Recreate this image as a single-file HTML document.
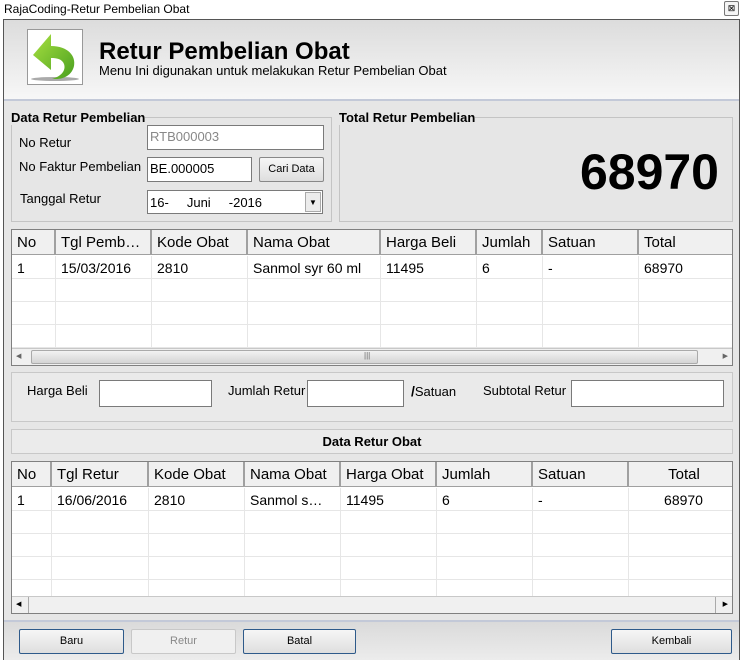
<!DOCTYPE html>
<html><head><meta charset="utf-8"><style>
*{box-sizing:border-box;margin:0;padding:0}
body{width:742px;height:661px;overflow:hidden;background:#fff;font-family:"Liberation Sans",sans-serif;position:relative;color:#000}
.a{position:absolute}
.t{font-size:13px;white-space:nowrap}
.inp{position:absolute;background:#fff;border:1px solid #7a7a7a;font-size:13px;padding:3px 2px;white-space:nowrap}
.btn{position:absolute;border:1px solid #2e5a8a;border-radius:2px;background:linear-gradient(#f6f6f6,#dedede);font-size:11px;text-align:center;line-height:22px}
.grid{position:absolute;background:#fff;border:1px solid #808080;overflow:hidden}
.hd{position:absolute;top:0;height:25px;background:#f0f0f0;border-right:2px solid #a0a0a0;border-bottom:1px solid #a0a0a0;font-size:15px;line-height:25px;padding-left:5px;white-space:nowrap;overflow:hidden}
.cell{position:absolute;font-size:14px;height:23px;line-height:24px;padding-left:5px;border-right:1px solid #e6e6e6;border-bottom:1px solid #e6e6e6;white-space:nowrap}
.sb{position:absolute;left:0;right:0;height:17px;background:#f0f0f0;border-top:1px solid #c8c8c8}
</style></head><body>
<div class="a t" style="left:4px;top:2px;font-size:12px">RajaCoding-Retur Pembelian Obat</div>
<div class="a" style="left:724px;top:1px;width:15px;height:15px;border:1px solid #777;border-radius:2px;font-size:9px;text-align:center;line-height:13px;background:#f4f4f4">&#8864;</div>
<div class="a" style="left:3px;top:19px;width:737px;height:641px;border:1px solid #555;background:#e6e6e6"></div>
<div class="a" style="left:4px;top:20px;width:735px;height:81px;background:linear-gradient(#dcdcdc,#f7f7f7);border-bottom:2px solid #c3c9d8"></div>
<div class="a" style="left:27px;top:29px;width:56px;height:56px;border:1px solid #999;background:#fff">
<svg width="54" height="54" viewBox="0 0 54 54"><defs><linearGradient id="g" x1="0" y1="0" x2="1" y2="1"><stop offset="0" stop-color="#a8e040"/><stop offset="1" stop-color="#4aa020"/></linearGradient></defs>
<ellipse cx="27" cy="49" rx="24" ry="2" fill="#aaa"/>
<path d="M5 25 L23 4 L23 16 C40 16 48 26 46 36 C44 45 36 49 28 49 L24 49 C34 46 38 40 36 34 C34 29 29 28 23 28 L23 40 Z" fill="url(#g)"/></svg></div>
<div class="a" style="left:99px;top:38px;font-size:24px;font-weight:bold;white-space:nowrap">Retur Pembelian Obat</div>
<div class="a t" style="left:99px;top:63px">Menu Ini digunakan untuk melakukan Retur Pembelian Obat</div>

<div class="a" style="left:11px;top:117px;width:321px;height:105px;border:1px solid #c4c4c4"></div>
<div class="a" style="left:11px;top:110px;font-size:13px;font-weight:bold;background:#e6e6e6;white-space:nowrap">Data Retur Pembelian</div>
<div class="a t" style="left:19px;top:135px">No Retur</div>
<div class="inp" style="left:147px;top:125px;width:177px;height:25px;color:#888">RTB000003</div>
<div class="a t" style="left:19px;top:159px">No Faktur Pembelian</div>
<div class="inp" style="left:147px;top:157px;width:105px;height:25px">BE.000005</div>
<div class="btn" style="left:259px;top:157px;width:65px;height:25px;border-color:#888">Cari Data</div>
<div class="a t" style="left:20px;top:191px">Tanggal Retur</div>
<div class="inp" style="left:147px;top:190px;width:176px;height:24px;padding-top:4px">16-&nbsp;&nbsp;&nbsp;&nbsp;&nbsp;Juni&nbsp;&nbsp;&nbsp;&nbsp;&nbsp;-2016</div>
<div class="a" style="left:305px;top:192px;width:16px;height:20px;background:#ececec;border:1px solid #aaa;font-size:8px;text-align:center;line-height:19px">&#9660;</div>

<div class="a" style="left:339px;top:117px;width:394px;height:105px;border:1px solid #c4c4c4"></div>
<div class="a" style="left:339px;top:110px;font-size:13px;font-weight:bold;background:#e6e6e6;white-space:nowrap">Total Retur Pembelian</div>
<div class="a" style="right:23px;top:143px;font-size:50px;font-weight:bold">68970</div>

<div class="grid" style="left:11px;top:229px;width:722px;height:137px">
<div class="hd" style="left:0;width:44px">No</div><div class="hd" style="left:44px;width:96px">Tgl Pemb…</div><div class="hd" style="left:140px;width:96px">Kode Obat</div><div class="hd" style="left:236px;width:133px">Nama Obat</div><div class="hd" style="left:369px;width:96px">Harga Beli</div><div class="hd" style="left:465px;width:66px">Jumlah</div><div class="hd" style="left:531px;width:96px">Satuan</div><div class="hd" style="left:627px;width:95px;border-right:0">Total</div>
<div class="cell" style="left:0;top:26px;width:44px">1</div><div class="cell" style="left:44px;top:26px;width:96px">15/03/2016</div><div class="cell" style="left:140px;top:26px;width:96px">2810</div><div class="cell" style="left:236px;top:26px;width:133px">Sanmol syr 60 ml</div><div class="cell" style="left:369px;top:26px;width:96px">11495</div><div class="cell" style="left:465px;top:26px;width:66px">6</div><div class="cell" style="left:531px;top:26px;width:96px">-</div><div class="cell" style="left:627px;top:26px;width:95px">68970</div>
<div class="cell" style="left:0;top:49px;width:44px"></div><div class="cell" style="left:44px;top:49px;width:96px"></div><div class="cell" style="left:140px;top:49px;width:96px"></div><div class="cell" style="left:236px;top:49px;width:133px"></div><div class="cell" style="left:369px;top:49px;width:96px"></div><div class="cell" style="left:465px;top:49px;width:66px"></div><div class="cell" style="left:531px;top:49px;width:96px"></div><div class="cell" style="left:627px;top:49px;width:95px"></div>
<div class="cell" style="left:0;top:72px;width:44px"></div><div class="cell" style="left:44px;top:72px;width:96px"></div><div class="cell" style="left:140px;top:72px;width:96px"></div><div class="cell" style="left:236px;top:72px;width:133px"></div><div class="cell" style="left:369px;top:72px;width:96px"></div><div class="cell" style="left:465px;top:72px;width:66px"></div><div class="cell" style="left:531px;top:72px;width:96px"></div><div class="cell" style="left:627px;top:72px;width:95px"></div>
<div class="cell" style="left:0;top:95px;width:44px"></div><div class="cell" style="left:44px;top:95px;width:96px"></div><div class="cell" style="left:140px;top:95px;width:96px"></div><div class="cell" style="left:236px;top:95px;width:133px"></div><div class="cell" style="left:369px;top:95px;width:96px"></div><div class="cell" style="left:465px;top:95px;width:66px"></div><div class="cell" style="left:531px;top:95px;width:96px"></div><div class="cell" style="left:627px;top:95px;width:95px"></div>
<div class="sb" style="top:118px"><div class="a" style="left:4px;top:3px;font-size:7px;color:#666">&#9664;</div><div class="a" style="left:19px;top:1px;width:667px;height:14px;border:1px solid #aaa;border-radius:2px;background:linear-gradient(#f2f2f2,#d4d4d4)"></div><div class="a" style="left:352px;top:2px;font-size:8px;color:#666">|||</div><div class="a" style="right:4px;top:3px;font-size:7px;color:#666">&#9654;</div></div>
</div>

<div class="a" style="left:11px;top:372px;width:722px;height:50px;border:1px solid #c8c8c8;background:#eaeaea"></div>
<div class="a t" style="left:27px;top:383px">Harga Beli</div>
<div class="inp" style="left:99px;top:380px;width:113px;height:27px"></div>
<div class="a t" style="left:228px;top:383px">Jumlah Retur</div>
<div class="inp" style="left:307px;top:380px;width:97px;height:27px"></div>
<div class="a t" style="left:411px;top:383px"><b style="font-size:14px">/</b>Satuan</div>
<div class="a t" style="left:483px;top:383px">Subtotal Retur</div>
<div class="inp" style="left:571px;top:380px;width:153px;height:27px"></div>

<div class="a" style="left:11px;top:429px;width:722px;height:25px;border:1px solid #c8c8c8;background:#ebebeb;text-align:center;font-size:13px;font-weight:bold;line-height:23px">Data Retur Obat</div>

<div class="grid" style="left:11px;top:461px;width:722px;height:153px">
<div class="hd" style="left:0;width:40px">No</div><div class="hd" style="left:40px;width:97px">Tgl Retur</div><div class="hd" style="left:137px;width:96px">Kode Obat</div><div class="hd" style="left:233px;width:96px">Nama Obat</div><div class="hd" style="left:329px;width:96px">Harga Obat</div><div class="hd" style="left:425px;width:96px">Jumlah</div><div class="hd" style="left:521px;width:96px">Satuan</div><div class="hd" style="left:617px;width:105px;border-right:0;text-align:center">Total</div>
<div class="cell" style="left:0;top:26px;width:40px">1</div><div class="cell" style="left:40px;top:26px;width:97px">16/06/2016</div><div class="cell" style="left:137px;top:26px;width:96px">2810</div><div class="cell" style="left:233px;top:26px;width:96px">Sanmol s…</div><div class="cell" style="left:329px;top:26px;width:96px">11495</div><div class="cell" style="left:425px;top:26px;width:96px">6</div><div class="cell" style="left:521px;top:26px;width:96px">-</div><div class="cell" style="left:617px;top:26px;width:105px;text-align:center">68970</div>
<div class="cell" style="left:0;top:49px;width:40px"></div><div class="cell" style="left:40px;top:49px;width:97px"></div><div class="cell" style="left:137px;top:49px;width:96px"></div><div class="cell" style="left:233px;top:49px;width:96px"></div><div class="cell" style="left:329px;top:49px;width:96px"></div><div class="cell" style="left:425px;top:49px;width:96px"></div><div class="cell" style="left:521px;top:49px;width:96px"></div><div class="cell" style="left:617px;top:49px;width:105px"></div>
<div class="cell" style="left:0;top:72px;width:40px"></div><div class="cell" style="left:40px;top:72px;width:97px"></div><div class="cell" style="left:137px;top:72px;width:96px"></div><div class="cell" style="left:233px;top:72px;width:96px"></div><div class="cell" style="left:329px;top:72px;width:96px"></div><div class="cell" style="left:425px;top:72px;width:96px"></div><div class="cell" style="left:521px;top:72px;width:96px"></div><div class="cell" style="left:617px;top:72px;width:105px"></div>
<div class="cell" style="left:0;top:95px;width:40px"></div><div class="cell" style="left:40px;top:95px;width:97px"></div><div class="cell" style="left:137px;top:95px;width:96px"></div><div class="cell" style="left:233px;top:95px;width:96px"></div><div class="cell" style="left:329px;top:95px;width:96px"></div><div class="cell" style="left:425px;top:95px;width:96px"></div><div class="cell" style="left:521px;top:95px;width:96px"></div><div class="cell" style="left:617px;top:95px;width:105px"></div>
<div class="cell" style="left:0;top:118px;width:40px"></div><div class="cell" style="left:40px;top:118px;width:97px"></div><div class="cell" style="left:137px;top:118px;width:96px"></div><div class="cell" style="left:233px;top:118px;width:96px"></div><div class="cell" style="left:329px;top:118px;width:96px"></div><div class="cell" style="left:425px;top:118px;width:96px"></div><div class="cell" style="left:521px;top:118px;width:96px"></div><div class="cell" style="left:617px;top:118px;width:105px"></div>
<div class="sb" style="top:134px"><div class="a" style="left:4px;top:3px;font-size:7px">&#9664;</div><div class="a" style="left:16px;top:0;width:1px;height:16px;background:#aaa"></div><div class="a" style="right:16px;top:0;width:1px;height:16px;background:#aaa"></div><div class="a" style="right:4px;top:3px;font-size:7px">&#9654;</div></div>
</div>

<div class="a" style="left:4px;top:620px;width:735px;height:40px;background:linear-gradient(#dadada,#ececec);border-top:2px solid #c3c9d8"></div>
<div class="btn" style="left:19px;top:629px;width:105px;height:25px">Baru</div>
<div class="btn" style="left:131px;top:629px;width:105px;height:25px;border-color:#c8c8c8;background:#f0f0f0;color:#888">Retur</div>
<div class="btn" style="left:243px;top:629px;width:113px;height:25px">Batal</div>
<div class="btn" style="left:611px;top:629px;width:121px;height:25px">Kembali</div>
</body></html>
